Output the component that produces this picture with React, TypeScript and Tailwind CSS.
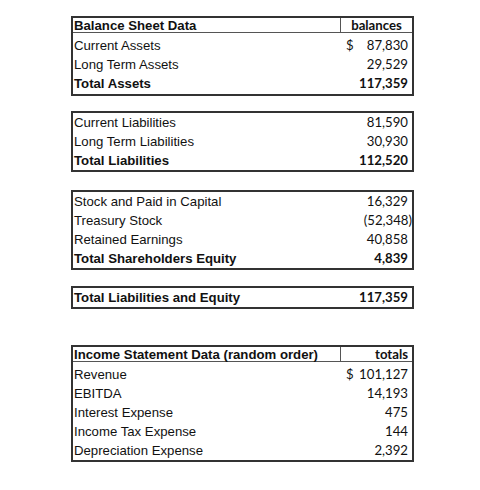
const label = "font-['Liberation_Sans',Arial,sans-serif] text-[13.2px] text-[#111]";
const num = "font-['Lato','Open_Sans',sans-serif] text-[13.2px] text-[#111]";

type Row = { label: string; value: string; dollar?: boolean; bold?: boolean; neg?: boolean };

function Value({ r }: { r: Row }) {
  return (
    <div className={`${num} ${r.bold ? "font-bold" : ""} flex w-[72px] items-center pl-[6px] pr-[4px]`}>
      {r.dollar && <span>$</span>}
      <span className={`ml-auto ${r.neg ? "-mr-[4px]" : ""}`}>{r.value}</span>
    </div>
  );
}

function Rows({ rows }: { rows: Row[] }) {
  return (
    <>
      {rows.map((r) => (
        <div key={r.label} className="flex h-[19px] items-center">
          <div className={`${label} ${r.bold ? "font-bold" : ""} flex-1 pl-px`}>{r.label}</div>
          <Value r={r} />
        </div>
      ))}
    </>
  );
}

export default function App() {
  return (
    <div className="h-[490px] w-[480px] bg-white pl-[71px] pt-[16px]">
      <div className="flex w-[343px] flex-col">
        {/* balance sheet */}
        <div className="border-2 border-[#333] pb-px">
          <div className="flex h-[15px] items-stretch border-b border-[#555]">
            <div className={`${label} flex flex-1 items-center pl-px pt-px font-bold`}>Balance Sheet Data</div>
            <div className={`${num} flex w-[72px] items-center justify-center border-l border-[#555] pt-px font-bold`}>
              balances
            </div>
          </div>
          <div className="pt-[3px]">
            <Rows
              rows={[
                { label: "Current Assets", value: "87,830", dollar: true },
                { label: "Long Term Assets", value: "29,529" },
                { label: "Total Assets", value: "117,359", bold: true },
              ]}
            />
          </div>
        </div>

        <div className="mt-[15px] border-2 border-[#333]">
          <Rows
            rows={[
              { label: "Current Liabilities", value: "81,590" },
              { label: "Long Term Liabilities", value: "30,930" },
              { label: "Total Liabilities", value: "112,520", bold: true },
            ]}
          />
        </div>

        <div className="mt-[18px] border-2 border-[#333]">
          <Rows
            rows={[
              { label: "Stock and Paid in Capital", value: "16,329" },
              { label: "Treasury Stock", value: "(52,348)", neg: true },
              { label: "Retained Earnings", value: "40,858" },
              { label: "Total Shareholders Equity", value: "4,839", bold: true },
            ]}
          />
        </div>

        <div className="mt-[16px] border-2 border-[#333]">
          <Rows rows={[{ label: "Total Liabilities and Equity", value: "117,359", bold: true }]} />
        </div>

        {/* income statement */}
        <div className="mt-[36px] border-2 border-[#333]">
          <div className="flex h-[15px] items-stretch border-b border-[#555]">
            <div className={`${label} flex flex-1 items-center pl-px pt-px font-bold`}>
              Income Statement Data (random order)
            </div>
            <div className={`${num} flex w-[72px] items-center justify-end border-l border-[#555] pr-[4px] pt-px font-bold`}>
              totals
            </div>
          </div>
          <div className="pt-[3px]">
            <Rows
              rows={[
                { label: "Revenue", value: "101,127", dollar: true },
                { label: "EBITDA", value: "14,193" },
                { label: "Interest Expense", value: "475" },
                { label: "Income Tax Expense", value: "144" },
                { label: "Depreciation Expense", value: "2,392" },
              ]}
            />
          </div>
        </div>
      </div>
    </div>
  );
}
